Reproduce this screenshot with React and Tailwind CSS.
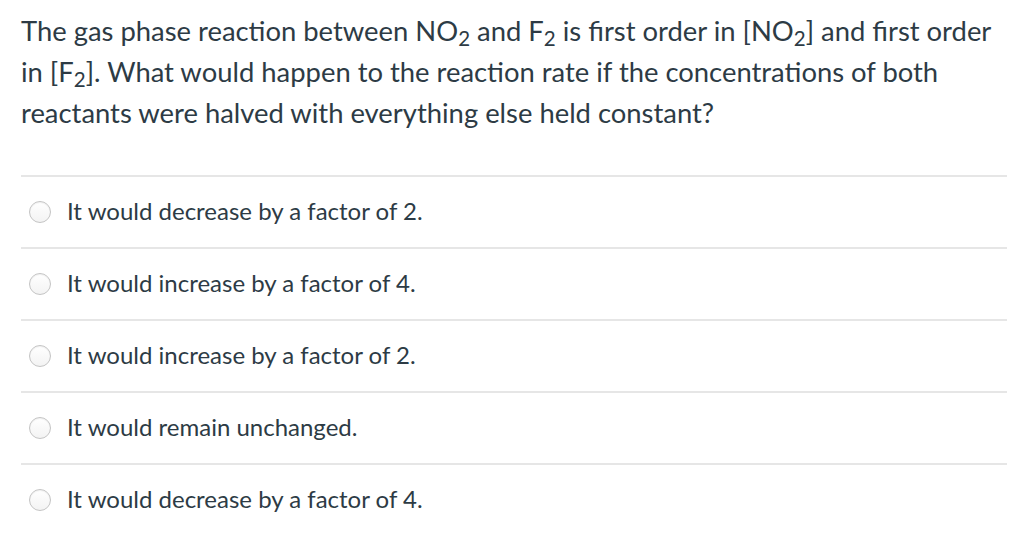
const OPTIONS = [
  "It would decrease by a factor of 2.",
  "It would increase by a factor of 4.",
  "It would increase by a factor of 2.",
  "It would remain unchanged.",
  "It would decrease by a factor of 4.",
];

function Radio() {
  return (
    <span className="block h-[22px] w-[22px] shrink-0 rounded-full border border-[#c4c4c4] bg-gradient-to-b from-white to-[#f3f3f3] shadow-[inset_0_1px_1px_rgba(0,0,0,0.06)]" />
  );
}

export default function App() {
  return (
    <div className="min-h-[551px] bg-white text-[#2d3b45]" style={{ fontFamily: "Lato, 'Open Sans', sans-serif" }}>
      <div className="w-[1007px] pl-[21px] pt-[10px]">
        <p className="text-[27.4px] leading-[41px]">
          The gas phase reaction between NO<sub>2</sub> and F<sub>2</sub> is first order in [NO<sub>2</sub>] and first
          order in [F<sub>2</sub>]. What would happen to the reaction rate if the concentrations of both reactants were
          halved with everything else held constant?
        </p>

        <div className="mt-[42px]">
          {OPTIONS.map((opt) => (
            <div key={opt} className="border-t-2 border-[#e6e6e6]">
              <label className="flex h-[70px] items-center gap-[16px] pl-[8px]">
                <Radio />
                <span className="-mt-[2px] text-[24px]">{opt}</span>
              </label>
            </div>
          ))}
        </div>
      </div>
    </div>
  );
}
